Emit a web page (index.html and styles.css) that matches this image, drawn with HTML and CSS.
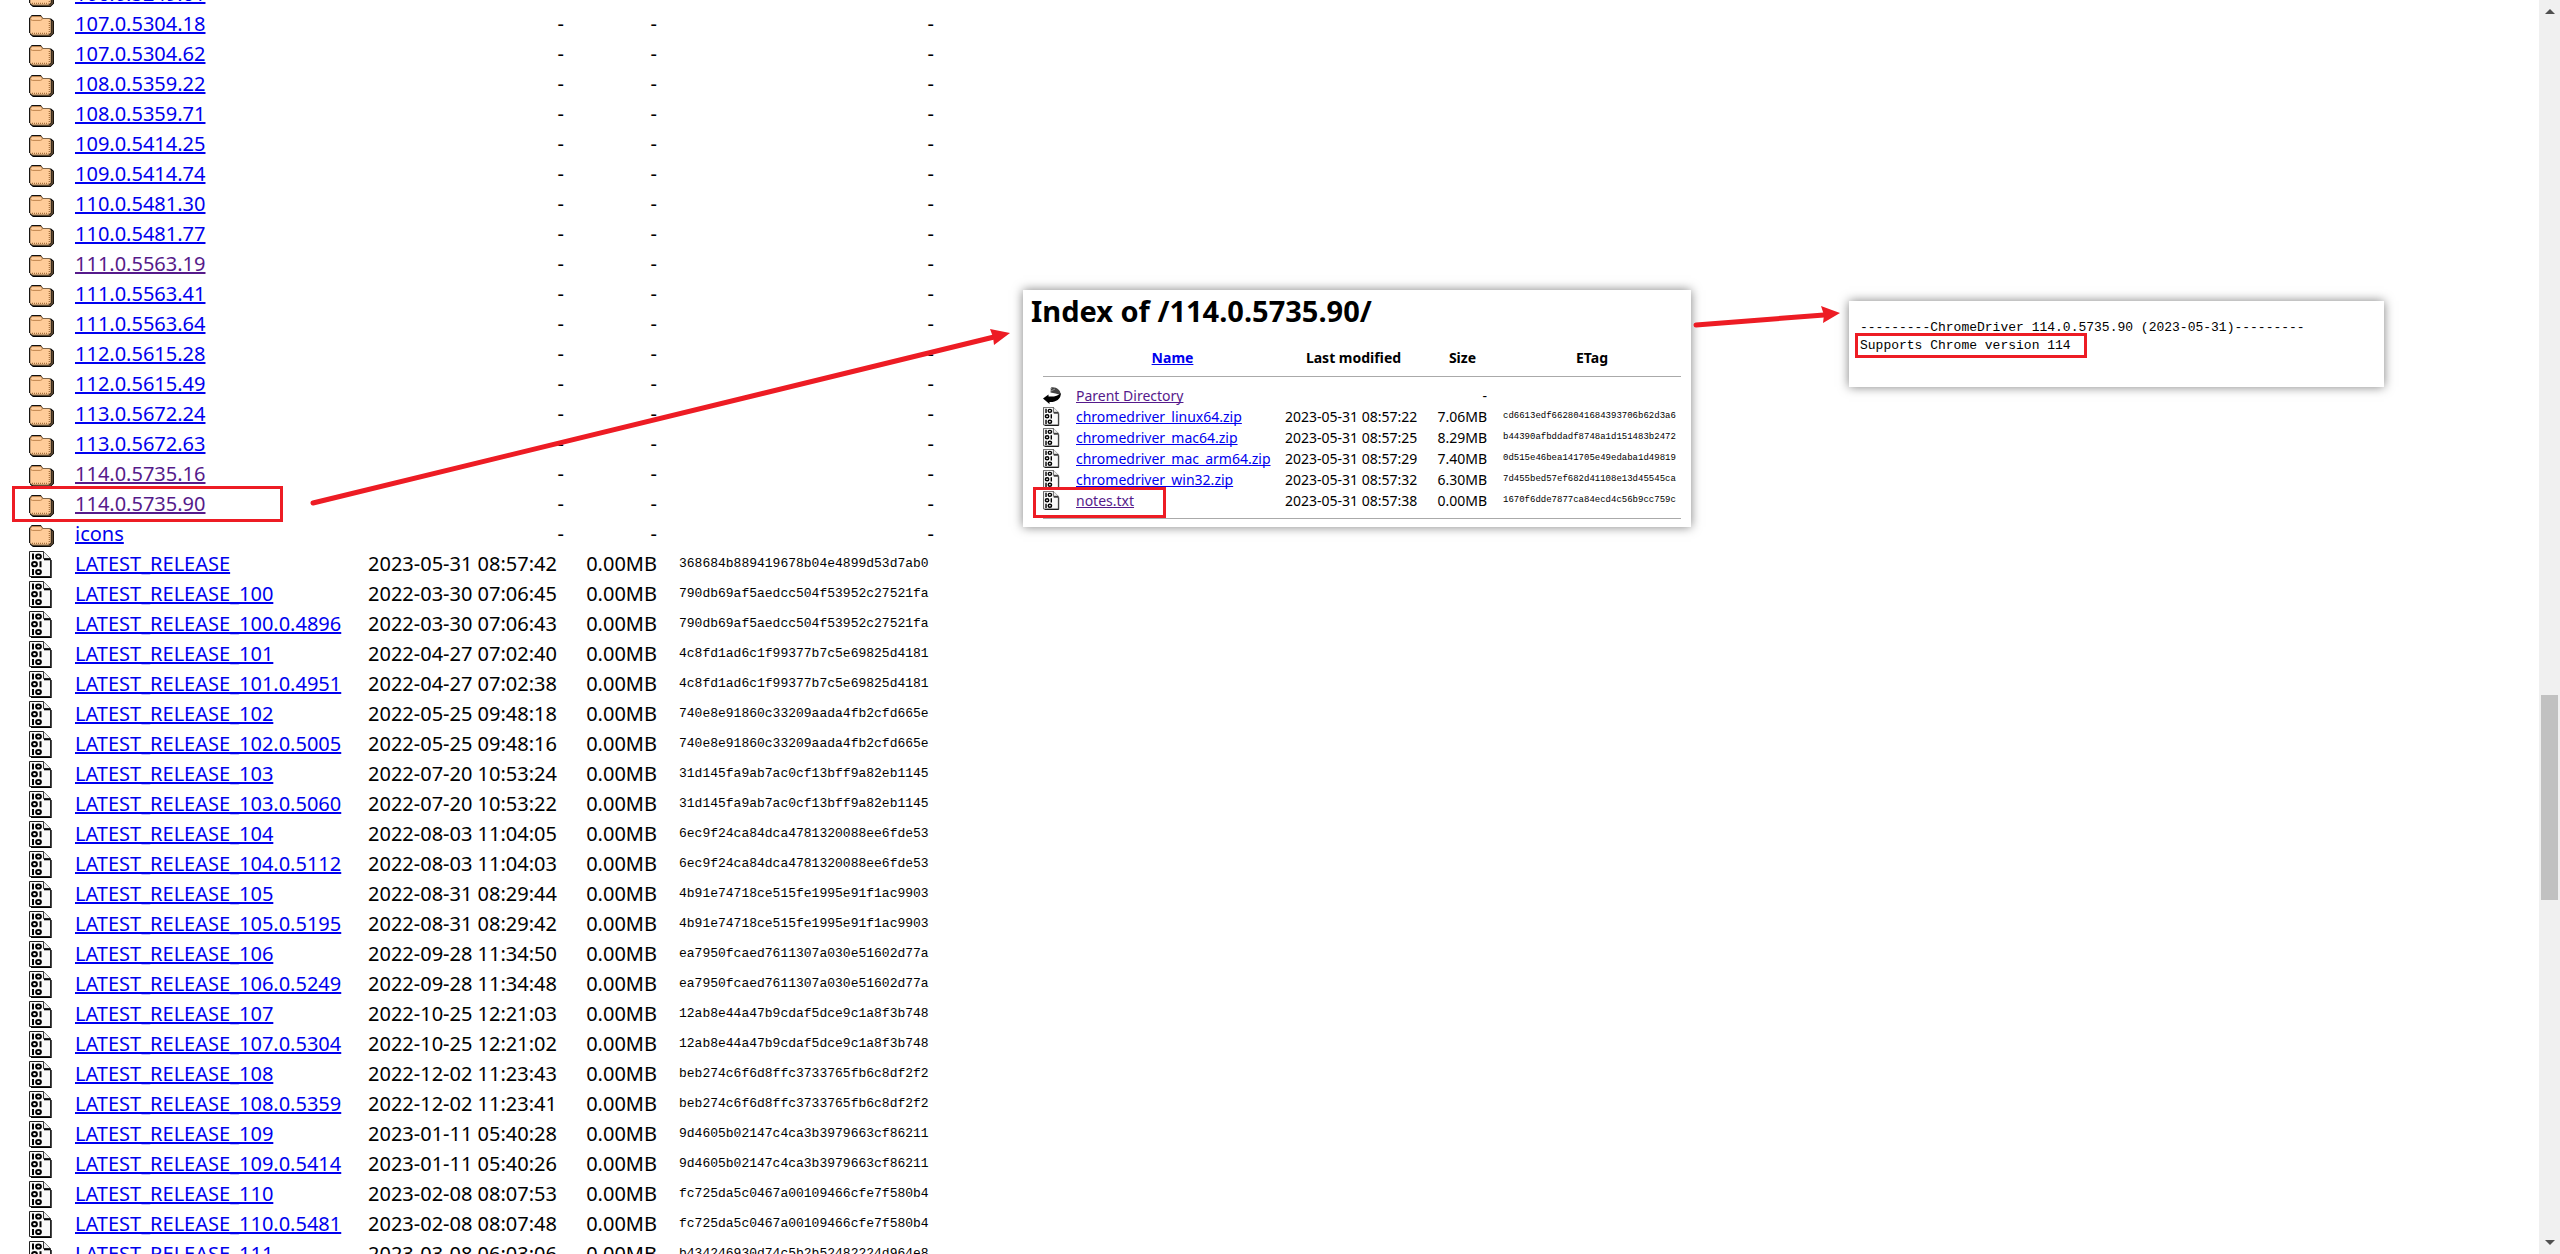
FILE: index.html
```
<!DOCTYPE html>
<html lang="en">
<head>
    <meta charset="UTF-8">
    <meta name="viewport" content="width=device-width, initial-scale=1.0">
    <title>Index of /</title>
    <link rel="stylesheet" href="styles.css">
</head>
<body>

    <!-- Icon shapes -->
    <svg class="icon-defs" aria-hidden="true">
        <symbol id="folder" viewBox="0 -4 25 27">
            <path d="M3 3 H13 L15 3.5 H22 L25 6 V18.5 L21.5 22 H4 L1 19.5 V5 Z" fill="#000"/>
            <path d="M4 20 L21 20.5 L23.5 18 V6" fill="none" stroke="#5c4630" stroke-width="1.6"/>
            <path d="M.7 4 V18 L3.5 20 H19.5 L22 17.5 V5.5 L20.5 3.5 H13.5 L11.5 1 H3 Z" fill="#fc9" stroke="#6b5338" stroke-width=".8"/>
            <path d="M.6 18 V3.5 L3 .6 H11.5 L13.3 3" fill="none" stroke="#111" stroke-width="1.1"/>
            <rect x="1.6" y="1.6" width="11.6" height="3.8" rx="1.9" fill="#ffcf9f" stroke="#b97d45" stroke-width=".9"/>
            <path d="M3 18.4 H19.5 M20.4 6 V17.5" fill="none" stroke="#a5703d" stroke-width="1.4" stroke-dasharray="1 1"/>
        </symbol>
        <symbol id="binary" viewBox="0 0 25 27">
            <path d="M2 26.2 H22 V9" fill="none" stroke="#000" stroke-width="1.4"/>
            <path d="M.5 .5 H14.5 L21.5 7.5 V25.5 H.5 Z" fill="#fafafa" stroke="#222" stroke-width="1"/>
            <path d="M14.5 .5 V7.5 H21.5" fill="#eee" stroke="#333" stroke-width="1"/>
            <path d="M15 8.5 H21" stroke="#000" stroke-width="1.6"/>
            <g fill="none" stroke="#000" stroke-width="2">
                <path d="M4 2.5 V8.5 M11.5 10.2 V16.2 M4 18 V24"/>
                <ellipse cx="9.5" cy="5.5" rx="2.4" ry="2.1"/>
                <ellipse cx="5.5" cy="13.2" rx="2.4" ry="2.1"/>
                <ellipse cx="9.5" cy="21" rx="2.4" ry="2.1"/>
            </g>
        </symbol>
        <symbol id="back" viewBox="0 0 18 17">
            <path d="M8 .5 C13 -.5 18 3 17.6 8 L12.5 6.5 L7.5 5.5 Z" fill="#444"/>
            <path d="M7 2 L9 1 M8 4 L12 2" stroke="#aaa" stroke-width=".8"/>
            <path d="M17.6 6 C18.5 12 13 15.4 6.5 15 V17 L0 11.5 L5.5 7.5 V9.5 C11 10 15 9 17.6 6 Z" fill="#000"/>
        </symbol>
    </svg>

    <div class="page">
        <main class="main-content">
            <table class="listing">
                <colgroup>
                    <col class="col-icon"><col class="col-name"><col class="col-date"><col class="col-size"><col class="col-etag">
                </colgroup>
                <tbody>
                    <tr><td><svg class="icon"><use href="#folder"/></svg></td><td><a href="#">106.0.5249.61</a></td><td class="right">-</td><td class="right">-</td><td class="right">-</td></tr>
                    <tr><td><svg class="icon"><use href="#folder"/></svg></td><td><a href="#">107.0.5304.18</a></td><td class="right">-</td><td class="right">-</td><td class="right">-</td></tr>
                    <tr><td><svg class="icon"><use href="#folder"/></svg></td><td><a href="#">107.0.5304.62</a></td><td class="right">-</td><td class="right">-</td><td class="right">-</td></tr>
                    <tr><td><svg class="icon"><use href="#folder"/></svg></td><td><a href="#">108.0.5359.22</a></td><td class="right">-</td><td class="right">-</td><td class="right">-</td></tr>
                    <tr><td><svg class="icon"><use href="#folder"/></svg></td><td><a href="#">108.0.5359.71</a></td><td class="right">-</td><td class="right">-</td><td class="right">-</td></tr>
                    <tr><td><svg class="icon"><use href="#folder"/></svg></td><td><a href="#">109.0.5414.25</a></td><td class="right">-</td><td class="right">-</td><td class="right">-</td></tr>
                    <tr><td><svg class="icon"><use href="#folder"/></svg></td><td><a href="#">109.0.5414.74</a></td><td class="right">-</td><td class="right">-</td><td class="right">-</td></tr>
                    <tr><td><svg class="icon"><use href="#folder"/></svg></td><td><a href="#">110.0.5481.30</a></td><td class="right">-</td><td class="right">-</td><td class="right">-</td></tr>
                    <tr><td><svg class="icon"><use href="#folder"/></svg></td><td><a href="#">110.0.5481.77</a></td><td class="right">-</td><td class="right">-</td><td class="right">-</td></tr>
                    <tr><td><svg class="icon"><use href="#folder"/></svg></td><td><a class="visited" href="#">111.0.5563.19</a></td><td class="right">-</td><td class="right">-</td><td class="right">-</td></tr>
                    <tr><td><svg class="icon"><use href="#folder"/></svg></td><td><a href="#">111.0.5563.41</a></td><td class="right">-</td><td class="right">-</td><td class="right">-</td></tr>
                    <tr><td><svg class="icon"><use href="#folder"/></svg></td><td><a href="#">111.0.5563.64</a></td><td class="right">-</td><td class="right">-</td><td class="right">-</td></tr>
                    <tr><td><svg class="icon"><use href="#folder"/></svg></td><td><a href="#">112.0.5615.28</a></td><td class="right">-</td><td class="right">-</td><td class="right">-</td></tr>
                    <tr><td><svg class="icon"><use href="#folder"/></svg></td><td><a href="#">112.0.5615.49</a></td><td class="right">-</td><td class="right">-</td><td class="right">-</td></tr>
                    <tr><td><svg class="icon"><use href="#folder"/></svg></td><td><a href="#">113.0.5672.24</a></td><td class="right">-</td><td class="right">-</td><td class="right">-</td></tr>
                    <tr><td><svg class="icon"><use href="#folder"/></svg></td><td><a href="#">113.0.5672.63</a></td><td class="right">-</td><td class="right">-</td><td class="right">-</td></tr>
                    <tr><td><svg class="icon"><use href="#folder"/></svg></td><td><a class="visited" href="#">114.0.5735.16</a></td><td class="right">-</td><td class="right">-</td><td class="right">-</td></tr>
                    <tr><td><svg class="icon"><use href="#folder"/></svg></td><td><a class="visited" href="#">114.0.5735.90</a></td><td class="right">-</td><td class="right">-</td><td class="right">-</td></tr>
                    <tr><td><svg class="icon"><use href="#folder"/></svg></td><td><a href="#">icons</a></td><td class="right">-</td><td class="right">-</td><td class="right">-</td></tr>
                    <tr><td><svg class="icon"><use href="#binary"/></svg></td><td><a href="#">LATEST_RELEASE</a></td><td>2023-05-31 08:57:42</td><td class="right">0.00MB</td><td class="etag">368684b889419678b04e4899d53d7ab0</td></tr>
                    <tr><td><svg class="icon"><use href="#binary"/></svg></td><td><a href="#">LATEST_RELEASE_100</a></td><td>2022-03-30 07:06:45</td><td class="right">0.00MB</td><td class="etag">790db69af5aedcc504f53952c27521fa</td></tr>
                    <tr><td><svg class="icon"><use href="#binary"/></svg></td><td><a href="#">LATEST_RELEASE_100.0.4896</a></td><td>2022-03-30 07:06:43</td><td class="right">0.00MB</td><td class="etag">790db69af5aedcc504f53952c27521fa</td></tr>
                    <tr><td><svg class="icon"><use href="#binary"/></svg></td><td><a href="#">LATEST_RELEASE_101</a></td><td>2022-04-27 07:02:40</td><td class="right">0.00MB</td><td class="etag">4c8fd1ad6c1f99377b7c5e69825d4181</td></tr>
                    <tr><td><svg class="icon"><use href="#binary"/></svg></td><td><a href="#">LATEST_RELEASE_101.0.4951</a></td><td>2022-04-27 07:02:38</td><td class="right">0.00MB</td><td class="etag">4c8fd1ad6c1f99377b7c5e69825d4181</td></tr>
                    <tr><td><svg class="icon"><use href="#binary"/></svg></td><td><a href="#">LATEST_RELEASE_102</a></td><td>2022-05-25 09:48:18</td><td class="right">0.00MB</td><td class="etag">740e8e91860c33209aada4fb2cfd665e</td></tr>
                    <tr><td><svg class="icon"><use href="#binary"/></svg></td><td><a href="#">LATEST_RELEASE_102.0.5005</a></td><td>2022-05-25 09:48:16</td><td class="right">0.00MB</td><td class="etag">740e8e91860c33209aada4fb2cfd665e</td></tr>
                    <tr><td><svg class="icon"><use href="#binary"/></svg></td><td><a href="#">LATEST_RELEASE_103</a></td><td>2022-07-20 10:53:24</td><td class="right">0.00MB</td><td class="etag">31d145fa9ab7ac0cf13bff9a82eb1145</td></tr>
                    <tr><td><svg class="icon"><use href="#binary"/></svg></td><td><a href="#">LATEST_RELEASE_103.0.5060</a></td><td>2022-07-20 10:53:22</td><td class="right">0.00MB</td><td class="etag">31d145fa9ab7ac0cf13bff9a82eb1145</td></tr>
                    <tr><td><svg class="icon"><use href="#binary"/></svg></td><td><a href="#">LATEST_RELEASE_104</a></td><td>2022-08-03 11:04:05</td><td class="right">0.00MB</td><td class="etag">6ec9f24ca84dca4781320088ee6fde53</td></tr>
                    <tr><td><svg class="icon"><use href="#binary"/></svg></td><td><a href="#">LATEST_RELEASE_104.0.5112</a></td><td>2022-08-03 11:04:03</td><td class="right">0.00MB</td><td class="etag">6ec9f24ca84dca4781320088ee6fde53</td></tr>
                    <tr><td><svg class="icon"><use href="#binary"/></svg></td><td><a href="#">LATEST_RELEASE_105</a></td><td>2022-08-31 08:29:44</td><td class="right">0.00MB</td><td class="etag">4b91e74718ce515fe1995e91f1ac9903</td></tr>
                    <tr><td><svg class="icon"><use href="#binary"/></svg></td><td><a href="#">LATEST_RELEASE_105.0.5195</a></td><td>2022-08-31 08:29:42</td><td class="right">0.00MB</td><td class="etag">4b91e74718ce515fe1995e91f1ac9903</td></tr>
                    <tr><td><svg class="icon"><use href="#binary"/></svg></td><td><a href="#">LATEST_RELEASE_106</a></td><td>2022-09-28 11:34:50</td><td class="right">0.00MB</td><td class="etag">ea7950fcaed7611307a030e51602d77a</td></tr>
                    <tr><td><svg class="icon"><use href="#binary"/></svg></td><td><a href="#">LATEST_RELEASE_106.0.5249</a></td><td>2022-09-28 11:34:48</td><td class="right">0.00MB</td><td class="etag">ea7950fcaed7611307a030e51602d77a</td></tr>
                    <tr><td><svg class="icon"><use href="#binary"/></svg></td><td><a href="#">LATEST_RELEASE_107</a></td><td>2022-10-25 12:21:03</td><td class="right">0.00MB</td><td class="etag">12ab8e44a47b9cdaf5dce9c1a8f3b748</td></tr>
                    <tr><td><svg class="icon"><use href="#binary"/></svg></td><td><a href="#">LATEST_RELEASE_107.0.5304</a></td><td>2022-10-25 12:21:02</td><td class="right">0.00MB</td><td class="etag">12ab8e44a47b9cdaf5dce9c1a8f3b748</td></tr>
                    <tr><td><svg class="icon"><use href="#binary"/></svg></td><td><a href="#">LATEST_RELEASE_108</a></td><td>2022-12-02 11:23:43</td><td class="right">0.00MB</td><td class="etag">beb274c6f6d8ffc3733765fb6c8df2f2</td></tr>
                    <tr><td><svg class="icon"><use href="#binary"/></svg></td><td><a href="#">LATEST_RELEASE_108.0.5359</a></td><td>2022-12-02 11:23:41</td><td class="right">0.00MB</td><td class="etag">beb274c6f6d8ffc3733765fb6c8df2f2</td></tr>
                    <tr><td><svg class="icon"><use href="#binary"/></svg></td><td><a href="#">LATEST_RELEASE_109</a></td><td>2023-01-11 05:40:28</td><td class="right">0.00MB</td><td class="etag">9d4605b02147c4ca3b3979663cf86211</td></tr>
                    <tr><td><svg class="icon"><use href="#binary"/></svg></td><td><a href="#">LATEST_RELEASE_109.0.5414</a></td><td>2023-01-11 05:40:26</td><td class="right">0.00MB</td><td class="etag">9d4605b02147c4ca3b3979663cf86211</td></tr>
                    <tr><td><svg class="icon"><use href="#binary"/></svg></td><td><a href="#">LATEST_RELEASE_110</a></td><td>2023-02-08 08:07:53</td><td class="right">0.00MB</td><td class="etag">fc725da5c0467a00109466cfe7f580b4</td></tr>
                    <tr><td><svg class="icon"><use href="#binary"/></svg></td><td><a href="#">LATEST_RELEASE_110.0.5481</a></td><td>2023-02-08 08:07:48</td><td class="right">0.00MB</td><td class="etag">fc725da5c0467a00109466cfe7f580b4</td></tr>
                    <tr><td><svg class="icon"><use href="#binary"/></svg></td><td><a href="#">LATEST_RELEASE_111</a></td><td>2023-03-08 06:03:06</td><td class="right">0.00MB</td><td class="etag">b434246930d74c5b2b52482224d964e8</td></tr>
                </tbody>
            </table>
        </main>

        <!-- Scrollbar -->
        <div class="scrollbar">
            <svg class="scroll-arrow" viewBox="0 0 10 5"><path d="M0 5 L5 0 L10 5 Z"/></svg>
            <div class="scroll-thumb"></div>
            <svg class="scroll-arrow" viewBox="0 0 10 5"><path d="M0 0 L5 5 L10 0 Z"/></svg>
        </div>
    </div>

    <!-- Folder window -->
    <section class="window window-folder">
        <h1>Index of /114.0.5735.90/</h1>
        <table class="listing small">
            <colgroup>
                <col class="col-icon"><col class="col-name"><col class="col-date"><col class="col-size"><col class="col-etag">
            </colgroup>
            <thead>
                <tr><th></th><th class="head-name"><a href="#">Name</a></th><th>Last modified</th><th class="head-size">Size</th><th class="head-etag">ETag</th></tr>
            </thead>
            <tbody>
                <tr class="rule"><td colspan="5"><hr></td></tr>
                <tr><td><svg class="icon"><use href="#back"/></svg></td><td><a class="visited" href="#">Parent Directory</a></td><td></td><td class="right">-</td><td></td></tr>
                <tr><td><svg class="icon"><use href="#binary"/></svg></td><td><a href="#">chromedriver_linux64.zip</a></td><td>2023-05-31 08:57:22</td><td class="right">7.06MB</td><td class="etag">cd6613edf6628041684393706b62d3a6</td></tr>
                <tr><td><svg class="icon"><use href="#binary"/></svg></td><td><a href="#">chromedriver_mac64.zip</a></td><td>2023-05-31 08:57:25</td><td class="right">8.29MB</td><td class="etag">b44390afbddadf8748a1d151483b2472</td></tr>
                <tr><td><svg class="icon"><use href="#binary"/></svg></td><td><a href="#">chromedriver_mac_arm64.zip</a></td><td>2023-05-31 08:57:29</td><td class="right">7.40MB</td><td class="etag">0d515e46bea141705e49edaba1d49819</td></tr>
                <tr><td><svg class="icon"><use href="#binary"/></svg></td><td><a href="#">chromedriver_win32.zip</a></td><td>2023-05-31 08:57:32</td><td class="right">6.30MB</td><td class="etag">7d455bed57ef682d41108e13d45545ca</td></tr>
                <tr><td><svg class="icon"><use href="#binary"/></svg></td><td><a class="visited" href="#">notes.txt</a></td><td>2023-05-31 08:57:38</td><td class="right">0.00MB</td><td class="etag">1670f6dde7877ca84ecd4c56b9cc759c</td></tr>
            </tbody>
        </table>
        <hr class="bottom-rule">
    </section>

    <!-- Notes window -->
    <section class="window window-notes">
        <pre>---------ChromeDriver 114.0.5735.90 (2023-05-31)---------
Supports Chrome version 114</pre>
    </section>

    <!-- Red marks -->
    <div class="mark mark-version"></div>
    <div class="mark mark-file"></div>
    <div class="mark mark-support"></div>
    <svg class="arrows" aria-hidden="true">
        <path class="arrow-line" d="M313 503 L994 337 M1696 325 L1824 315"/>
        <path class="arrow-head" d="M1010 333 L990 329 L993 337 L994 345 Z"/>
        <path class="arrow-head" d="M1840 313 L1821 306 L1824 315 L1823 323 Z"/>
    </svg>

</body>
</html>
```
FILE: styles.css
```
body {
    margin: 0;
    height: 100vh;
    overflow: hidden;
    position: relative;
    background-color: #fff;
    color: #000;
    font-family: "Noto Sans", sans-serif;
    font-size: 20px;
}

a {
    color: #0000ee;
    text-decoration-thickness: 2px;
    text-underline-offset: 1px;
    text-decoration-skip-ink: none;
}

a.visited {
    color: #551a8b;
}

.icon-defs {
    position: absolute;
    width: 0;
    height: 0;
}

.page {
    display: flex;
    height: 100vh;
}

.main-content {
    flex: 1;
    overflow: hidden;
    padding-left: 29px;
}

/* Directory listing */
.listing {
    table-layout: fixed;
    border-collapse: collapse;
    width: 905px;
    line-height: 30px;
    white-space: nowrap;
}

/* the list is scrolled part of the way into its first row */
.main-content .listing {
    margin-top: -21px;
}

.listing tr {
    height: 30px;
}

.listing th,
.listing td {
    padding: 0;
}

.col-icon {
    width: 46px;
}

.col-name {
    width: 293px;
}

.col-date {
    width: 196px;
}

.col-size {
    width: 93px;
}

.right {
    text-align: right;
}

.icon {
    display: block;
    width: 25px;
    height: 27px;
}

.listing .etag {
    padding-left: 22px;
    font-family: "Liberation Mono", monospace;
    font-size: 13px;
}

/* Scrollbar */
.scrollbar {
    position: relative;
    display: flex;
    flex-direction: column;
    justify-content: space-between;
    align-items: center;
    width: 21px;
    padding: 9px 0;
    box-sizing: border-box;
    background-color: #f0f0f0;
}

.scroll-arrow {
    width: 10px;
    height: 5px;
    fill: #505050;
}

.scroll-thumb {
    position: absolute;
    top: 695px;
    left: 2px;
    right: 2px;
    height: 205px;
    background-color: #c1c1c1;
}

/* Floating windows */
.window {
    position: absolute;
    box-sizing: border-box;
    background-color: #fff;
    box-shadow: 0 0 10px rgba(0, 0, 0, 0.5);
}

.window-folder {
    left: 1023px;
    top: 290px;
    width: 668px;
    padding: 0 10px 8px 20px;
}

.window-folder h1 {
    margin: 0 0 15px -12px;
    font-size: 29px;
    line-height: 42px;
}

.small {
    width: 638px;
    font-size: 14px;
    line-height: 21px;
}

.small tr {
    height: 21px;
}

.small .rule {
    height: 17px;
}

.small a {
    text-decoration-thickness: 1px;
}

.small .col-icon {
    width: 33px;
}

.small .col-name {
    width: 209px;
}

.small .col-date {
    width: 137px;
}

.small .col-size {
    width: 65px;
}

.small .head-name {
    padding-right: 16px;
}

.small .head-size,
.small .head-etag {
    padding-left: 16px;
}

.small .icon {
    width: 18px;
    height: 19px;
}

.small .etag {
    padding-left: 16px;
    font-size: 9px;
}

hr {
    margin: 0;
    border: 0;
    border-top: 1px solid #aaa;
}

.bottom-rule {
    margin-top: 7px;
}

.window-notes {
    left: 1849px;
    top: 301px;
    width: 535px;
    padding: 18px 11px 32px;
}

.window-notes pre {
    margin: 0;
    font-family: "Liberation Mono", monospace;
    font-size: 13px;
    line-height: 18px;
}

/* Red marks */
.mark {
    position: absolute;
    box-sizing: border-box;
    border: 3px solid #ed1c24;
}

.mark-version {
    left: 12px;
    top: 486px;
    width: 271px;
    height: 36px;
}

.mark-file {
    left: 1033px;
    top: 487px;
    width: 133px;
    height: 31px;
}

.mark-support {
    left: 1855px;
    top: 333px;
    width: 232px;
    height: 25px;
}

.arrows {
    position: absolute;
    top: 0;
    left: 0;
    width: 100%;
    height: 100%;
    pointer-events: none;
}

.arrow-line {
    fill: none;
    stroke: #ed1c24;
    stroke-width: 5;
    stroke-linecap: round;
}

.arrow-head {
    fill: #ed1c24;
}
```
